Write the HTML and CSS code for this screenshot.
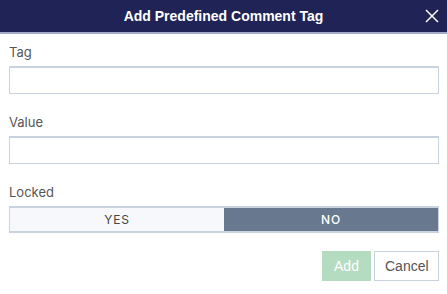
FILE: index.html
```html
<!DOCTYPE html>
<html lang="en">
<head>
    <meta charset="UTF-8">
    <meta name="viewport" content="width=device-width, initial-scale=1.0">
    <title>Add Predefined Comment Tag</title>
    <link rel="stylesheet" href="styles.css">
</head>
<body>
    <div class="dialogo">
        <div class="cabecalho">
            <span class="titulo">Add Predefined Comment Tag</span>
            <button class="fechar" title="Close">
                <svg width="14" height="14" viewBox="0 0 14 14">
                    <path d="M1 1 L13 13 M13 1 L1 13" stroke="#ffffff" stroke-width="1.5" fill="none"/>
                </svg>
            </button>
        </div>
        <div class="corpo">
            <div class="campo">
                <label class="rotulo">Tag</label>
                <input class="entrada" type="text">
            </div>
            <div class="campo">
                <label class="rotulo">Value</label>
                <input class="entrada" type="text">
            </div>
            <div class="campo">
                <label class="rotulo">Locked</label>
                <div class="alternar">
                    <button class="opcao">YES</button>
                    <button class="opcao ativa">NO</button>
                </div>
            </div>
            <div class="acoes">
                <button class="botao adicionar" disabled>Add</button>
                <button class="botao cancelar">Cancel</button>
            </div>
        </div>
    </div>
</body>
</html>
```

FILE: styles.css
```css
body {
    margin: 0;
    background-color: #ffffff;
    font-family: 'Inter', 'Liberation Sans', sans-serif;
}

.cabecalho {
    height: 32px;
    background-color: #1f2355;
    border-bottom: 2px solid #a3abc9;
    display: flex;
    align-items: center;
    justify-content: center;
    position: relative;
}

.titulo {
    color: #ffffff;
    font-family: 'Liberation Sans', Arial, sans-serif;
    font-weight: bold;
    font-size: 14px;
}

.fechar {
    position: absolute;
    right: 8px;
    top: 9px;
    background: none;
    border: none;
    padding: 0;
    width: 14px;
    height: 14px;
    cursor: pointer;
}

.corpo {
    padding: 10px 8px 0 9px;
}

.campo {
    margin-bottom: 20px;
}

.rotulo {
    display: block;
    font-size: 13px;
    line-height: 16px;
    color: #555555;
    margin-bottom: 6px;
}

.entrada {
    display: block;
    box-sizing: border-box;
    width: 100%;
    height: 28px;
    border: 1px solid #c9d3df;
    border-top-width: 2px;
    margin: 0;
    padding: 0 6px;
    font-size: 13px;
}

.alternar {
    display: flex;
    height: 27px;
    box-sizing: border-box;
    border: 1px solid #c9d3df;
    border-top-width: 2px;
    border-bottom-width: 2px;
}

.opcao {
    flex: 1;
    border: none;
    margin: 0;
    background-color: #f6f8fb;
    color: #444444;
    font-family: 'Inter', 'Liberation Sans', sans-serif;
    font-size: 12px;
    letter-spacing: 0.8px;
    cursor: pointer;
}

.opcao.ativa {
    background-color: #68788f;
    color: #ffffff;
    font-weight: 500;
}

.acoes {
    display: flex;
    justify-content: flex-end;
    gap: 3px;
    margin-top: -2px;
}

.botao {
    height: 30px;
    font-family: 'Liberation Sans', Arial, sans-serif;
    font-size: 14px;
    padding: 0 10px;
    cursor: pointer;
}

.adicionar {
    background-color: #b4dcc0;
    border: none;
    color: #ffffff;
    width: 49px;
}

.cancelar {
    background-color: #ffffff;
    border: 1px solid #c9d3df;
    color: #555555;
    width: 65px;
}
```
